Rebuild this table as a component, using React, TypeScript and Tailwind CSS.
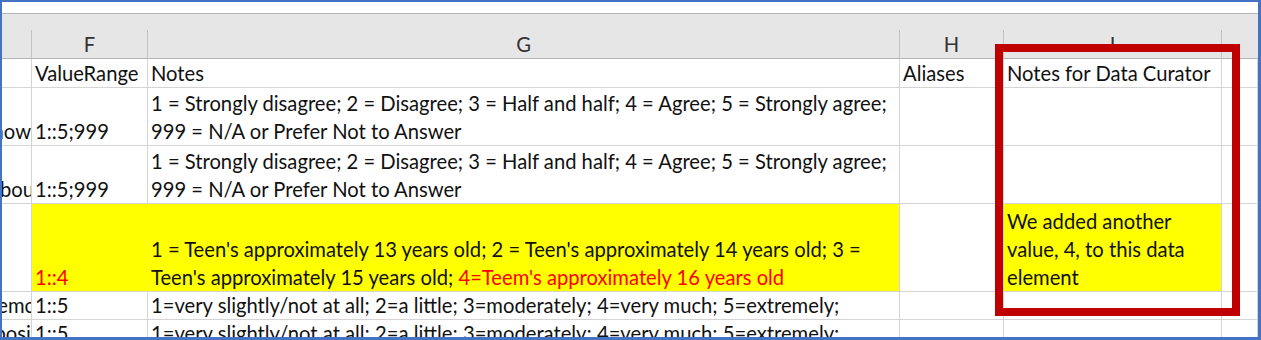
import React from "react"

const cols = "grid grid-cols-[30px_116px_752px_104px_218px_1fr]"
const cell = "border-r border-b border-[#d4d4d4] overflow-hidden"

type CutProps = { text: string; shift: string }

// text spilling in from the column left of F, clipped on both sides
const Cut = ({ text, shift }: CutProps) => {
  return (
    <div className={`${cell} flex items-end justify-end`}>
      <span className={`whitespace-nowrap ${shift}`}>{text}</span>
    </div>
  )
}

export default function App() {
  return (
    <div className="relative w-[1261px] h-[340px] overflow-hidden bg-white border-l-2 border-t-2 border-r-[3px] border-b-[3px] border-[#4472c4] text-[20.2px] leading-[28px] text-[#111] font-['Lato','Liberation_Sans',sans-serif]">
      <div className="h-[11px]" />

      {/* column letters */}
      <div className="h-[46px] bg-[#e6e6e6] border-t border-b border-[#b4b4b4] flex flex-col">
        <div className="h-[16px]" />
        <div className={`${cols} flex-1 text-[#333]`}>
          <div className="border-r border-[#c2c2c2]" />
          <div className="border-r border-[#c2c2c2] flex items-center justify-center">F</div>
          <div className="border-r border-[#c2c2c2] flex items-center justify-center">G</div>
          <div className="border-r border-[#c2c2c2] flex items-center justify-center">H</div>
          <div className="border-r border-[#c2c2c2] flex items-center justify-center">I</div>
          <div />
        </div>
      </div>

      {/* row 1: field names */}
      <div className={`${cols} h-[29px]`}>
        <div className={cell} />
        <div className={`${cell} pl-[3px] flex items-end`}>ValueRange</div>
        <div className={`${cell} pl-[3px] flex items-end`}>Notes</div>
        <div className={`${cell} pl-[3px] flex items-end`}>Aliases</div>
        <div className={`${cell} pl-[3px] flex items-end`}>Notes for Data Curator</div>
        <div className={cell} />
      </div>

      {/* row 2 */}
      <div className={`${cols} h-[58px]`}>
        <Cut text="know" shift="mr-0" />
        <div className={`${cell} pl-[3px] flex items-end`}>1::5;999</div>
        <div className={`${cell} pl-[3px] flex items-end`}>
          <div>
            1 = Strongly disagree; 2 = Disagree; 3 = Half and half; 4 = Agree; 5 = Strongly agree;
            <br />
            999 = N/A or Prefer Not to Answer
          </div>
        </div>
        <div className={cell} />
        <div className={cell} />
        <div className={cell} />
      </div>

      {/* row 3 */}
      <div className={`${cols} h-[58px]`}>
        <Cut text="abou" shift="mr-[-3px]" />
        <div className={`${cell} pl-[3px] flex items-end`}>1::5;999</div>
        <div className={`${cell} pl-[3px] flex items-end`}>
          <div>
            1 = Strongly disagree; 2 = Disagree; 3 = Half and half; 4 = Agree; 5 = Strongly agree;
            <br />
            999 = N/A or Prefer Not to Answer
          </div>
        </div>
        <div className={cell} />
        <div className={cell} />
        <div className={cell} />
      </div>

      {/* row 4: changed element */}
      <div className={`${cols} h-[88px]`}>
        <div className={cell} />
        <div className="border-b border-[#d4d4d4] bg-[#ffff00] pl-[3px] flex items-end text-[#ff0000]">1::4</div>
        <div className="border-r border-b border-[#d4d4d4] bg-[#ffff00] pl-[3px] flex items-end">
          <div>
            1 = Teen's approximately 13 years old; 2 = Teen's approximately 14 years old; 3 =
            <br />
            Teen's approximately 15 years old; <span className="text-[#ff0000]">4=Teem's approximately 16 years old</span>
          </div>
        </div>
        <div className={cell} />
        <div className="border-r border-b border-[#d4d4d4] bg-[#ffff00] pl-[3px] flex items-end">
          <div>
            We added another
            <br />
            value, 4, to this data
            <br />
            element
          </div>
        </div>
        <div className={cell} />
      </div>

      {/* row 5 */}
      <div className={`${cols} h-[28px]`}>
        <Cut text="emo" shift="mr-[-5px]" />
        <div className={`${cell} pl-[3px] flex items-end`}>1::5</div>
        <div className={`${cell} pl-[3px] flex items-end`}>
          1=very slightly/not at all; 2=a little; 3=moderately; 4=very much; 5=extremely;
        </div>
        <div className={cell} />
        <div className={cell} />
        <div className={cell} />
      </div>

      {/* row 6 */}
      <div className={`${cols} h-[28px]`}>
        <Cut text="posit" shift="mr-[-7px]" />
        <div className={`${cell} pl-[3px] flex items-end`}>1::5</div>
        <div className={`${cell} pl-[3px] flex items-end`}>
          1=very slightly/not at all; 2=a little; 3=moderately; 4=very much; 5=extremely;
        </div>
        <div className={cell} />
        <div className={cell} />
        <div className={cell} />
      </div>

      {/* annotation box */}
      <div className="absolute left-[993px] top-[42px] w-[245px] h-[272px] border-8 border-[#c00000]" />
    </div>
  )
}
